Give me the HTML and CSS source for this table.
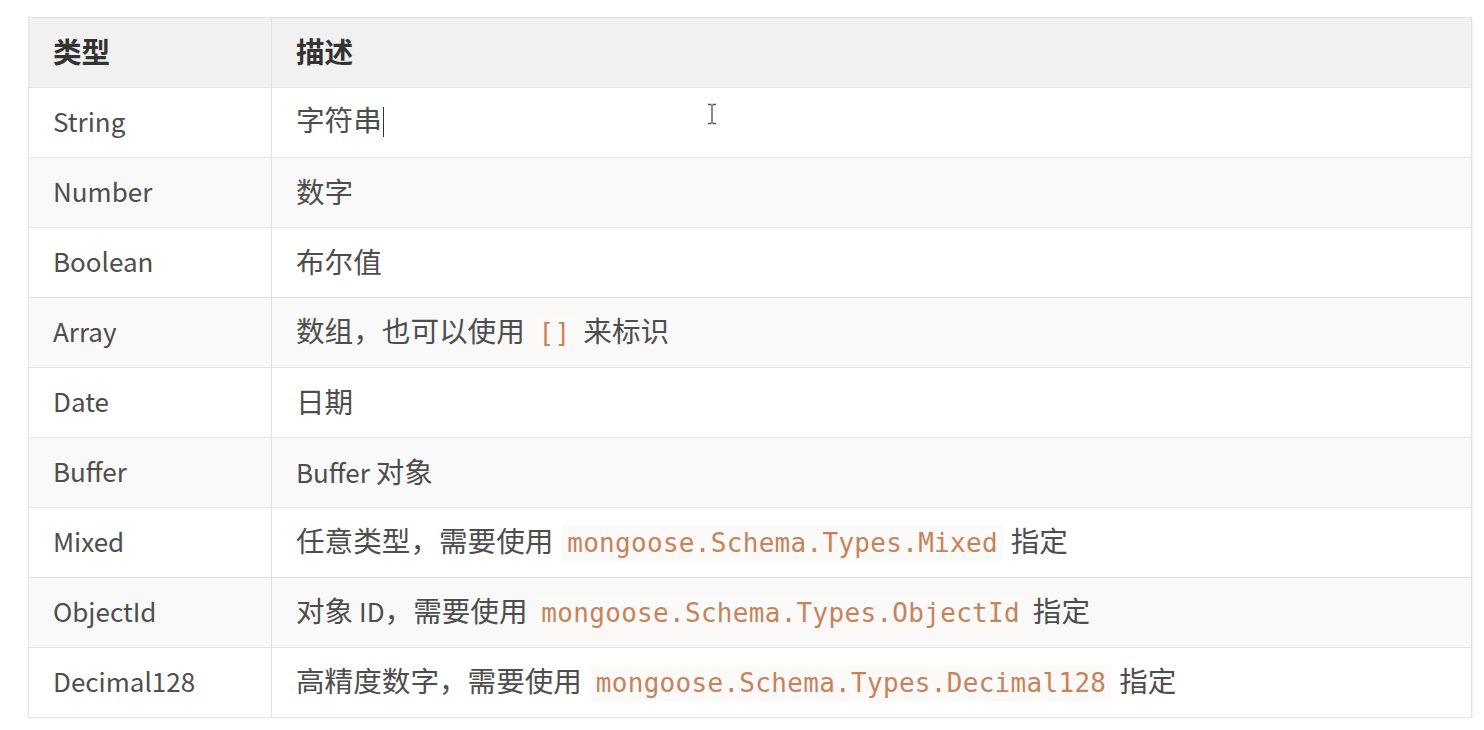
FILE: index.html
```html
<!DOCTYPE html>
<html lang="zh">
<head>
<meta charset="utf-8">
<title>Mongoose Schema Types</title>
<link rel="stylesheet" href="styles.css">
</head>
<body>
<div class="wrap">
<table class="types">
  <thead>
    <tr><th class="c1"><span class="zh">类型</span></th><th><span class="zh">描述</span></th></tr>
  </thead>
  <tbody>
    <tr><td class="c1">String</td><td><span class="zh">字符串</span><span class="caret"></span></td></tr>
    <tr><td class="c1">Number</td><td><span class="zh">数字</span></td></tr>
    <tr><td class="c1">Boolean</td><td><span class="zh">布尔值</span></td></tr>
    <tr><td class="c1">Array</td><td><span class="zh">数组，也可以使用</span> <code>[]</code> <span class="zh">来标识</span></td></tr>
    <tr><td class="c1">Date</td><td><span class="zh">日期</span></td></tr>
    <tr><td class="c1">Buffer</td><td>Buffer <span class="zh">对象</span></td></tr>
    <tr><td class="c1">Mixed</td><td><span class="zh">任意类型，需要使用</span> <code>mongoose.Schema.Types.Mixed</code> <span class="zh">指定</span></td></tr>
    <tr><td class="c1">ObjectId</td><td><span class="zh">对象</span> ID<span class="zh">，需要使用</span> <code>mongoose.Schema.Types.ObjectId</code> <span class="zh">指定</span></td></tr>
    <tr><td class="c1">Decimal128</td><td><span class="zh">高精度数字，需要使用</span> <code>mongoose.Schema.Types.Decimal128</code> <span class="zh">指定</span></td></tr>
  </tbody>
</table>
<svg class="ibeam" width="12" height="22" viewBox="0 0 12 22"><path d="M2 1.5h3.5M6.5 1.5h3.5M6 2v18M2 20.5h3.5M6.5 20.5h3.5" stroke="#555" stroke-width="1.4" fill="none"/></svg>
</div>
</body>
</html>
```
FILE: styles.css
```css
html, body {
  margin: 0;
  padding: 0;
  background: #ffffff;
}
.wrap {
  position: relative;
  padding: 17px 0 0 28px;
}
.types {
  width: 1444px;
  border-collapse: collapse;
  font-family: "Noto Sans CJK SC", "Noto Sans", sans-serif;
  font-size: 26px;
  color: #4d4d4d;
  box-shadow: 2px 2px 3px rgba(0,0,0,0.04);
}
.types th, .types td {
  height: 66px;
  padding: 0 24px 3px;
  text-align: left;
  vertical-align: middle;
  border: 1px solid #e3e3e3;
  line-height: 1;
}
.types th {
  background: #f1f1f1;
  font-weight: 700;
  color: #333333;
}
.types .c1 {
  width: 194px;
}
.types tbody tr:nth-child(even) td {
  background: #f9f9f9;
}
.zh {
  font-size: 28.6px;
}
.types code {
  font-family: "DejaVu Sans Mono", "Liberation Mono", monospace;
  font-size: 26px;
  color: #c8825a;
  background: #fcfaf8;
  padding: 3px 5px;
  margin: 0 2px 0 3px;
  border-radius: 3px;
  letter-spacing: 0.3px;
}
.caret {
  display: inline-block;
  width: 1.5px;
  height: 30px;
  background: #333;
  vertical-align: -6px;
  margin-left: 1px;
}
.ibeam {
  position: absolute;
  left: 706px;
  top: 103px;
}
```
